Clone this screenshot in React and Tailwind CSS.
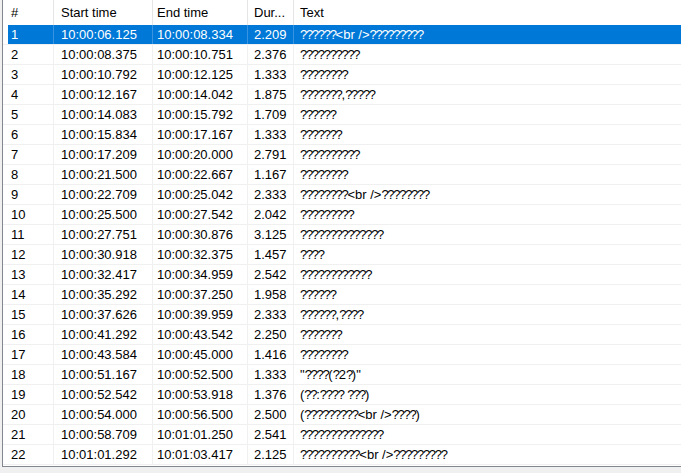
const rows = [
  ["1", "10:00:06.125", "10:00:08.334", "2.209", "??????<br />?????????"],
  ["2", "10:00:08.375", "10:00:10.751", "2.376", "??????????"],
  ["3", "10:00:10.792", "10:00:12.125", "1.333", "????????"],
  ["4", "10:00:12.167", "10:00:14.042", "1.875", "???????,?????"],
  ["5", "10:00:14.083", "10:00:15.792", "1.709", "??????"],
  ["6", "10:00:15.834", "10:00:17.167", "1.333", "???????"],
  ["7", "10:00:17.209", "10:00:20.000", "2.791", "??????????"],
  ["8", "10:00:21.500", "10:00:22.667", "1.167", "????????"],
  ["9", "10:00:22.709", "10:00:25.042", "2.333", "????????<br />????????"],
  ["10", "10:00:25.500", "10:00:27.542", "2.042", "?????????"],
  ["11", "10:00:27.751", "10:00:30.876", "3.125", "??????????????"],
  ["12", "10:00:30.918", "10:00:32.375", "1.457", "????"],
  ["13", "10:00:32.417", "10:00:34.959", "2.542", "????????????"],
  ["14", "10:00:35.292", "10:00:37.250", "1.958", "??????"],
  ["15", "10:00:37.626", "10:00:39.959", "2.333", "??????,????"],
  ["16", "10:00:41.292", "10:00:43.542", "2.250", "???????"],
  ["17", "10:00:43.584", "10:00:45.000", "1.416", "????????"],
  ["18", "10:00:51.167", "10:00:52.500", "1.333", "\"????(?2?)\""],
  ["19", "10:00:52.542", "10:00:53.918", "1.376", "(??:???? ???)"],
  ["20", "10:00:54.000", "10:00:56.500", "2.500", "(?????????<br />????)"],
  ["21", "10:00:58.709", "10:01:01.250", "2.541", "??????????????"],
  ["22", "10:01:01.292", "10:01:03.417", "2.125", "??????????<br />?????????"],
];

// the subtitle text came through as "?" — those glyphs are narrow in the original font
function SubText({ text }) {
  const parts = text.split(/(\?+)/).filter(Boolean);
  return (
    <span className="whitespace-pre">
      {parts.map((p, i) =>
        p[0] === "?" ? (
          <span key={i} className="tracking-[-1.3px]">{p}</span>
        ) : (
          <span key={i}>{p}</span>
        )
      )}
    </span>
  );
}

export default function App() {
  const font = { fontFamily: '"Liberation Sans", Arial, sans-serif' };

  return (
    <div className="w-[681px] h-[473px] bg-[#f0f0f0] overflow-hidden" style={font}>
      <div className="ml-[2px] h-[467px] bg-white border-l border-b border-[#828790] text-[13px] text-black leading-none">
        {/* HEADER */}
        <div className="flex h-[25px] items-center">
          <div className="w-[5px] shrink-0" />
          <div className="w-[46px] shrink-0 h-full flex items-center pl-[3px] border-r border-[#e5e5e5]">#</div>
          <div className="w-[99px] shrink-0 h-full flex items-center pl-[7px] border-r border-[#e5e5e5]">Start time</div>
          <div className="w-[95px] shrink-0 h-full flex items-center pl-[4px] border-r border-[#e5e5e5]">End time</div>
          <div className="w-[46px] shrink-0 h-full flex items-center pl-[6px] border-r border-[#e5e5e5]">Dur...</div>
          <div className="flex-1 h-full flex items-center pl-[6px]">Text</div>
        </div>

        {/* ROWS */}
        {rows.map((r, idx) => {
          const sel = idx === 0;
          const cell = sel ? "border-[#3a93e0]" : "border-[#f0f0f0]";
          return (
            <div key={r[0]} className="flex h-[20px] border-b border-[#f0f0f0]">
              <div className="w-[5px] shrink-0 bg-white" />
              <div className={`flex flex-1 ${sel ? "bg-[#0078d7] text-white" : ""}`}>
                <div className={`w-[46px] shrink-0 flex items-center pl-[3px] border-r ${cell}`}>{r[0]}</div>
                <div className={`w-[99px] shrink-0 flex items-center pl-[7px] border-r ${cell}`}>{r[1]}</div>
                <div className={`w-[95px] shrink-0 flex items-center pl-[4px] border-r ${cell}`}>{r[2]}</div>
                <div className={`w-[46px] shrink-0 flex items-center pl-[6px] border-r ${cell}`}>{r[3]}</div>
                <div className="flex-1 flex items-center pl-[6px]">
                  <SubText text={r[4]} />
                </div>
              </div>
            </div>
          );
        })}
      </div>
    </div>
  );
}
